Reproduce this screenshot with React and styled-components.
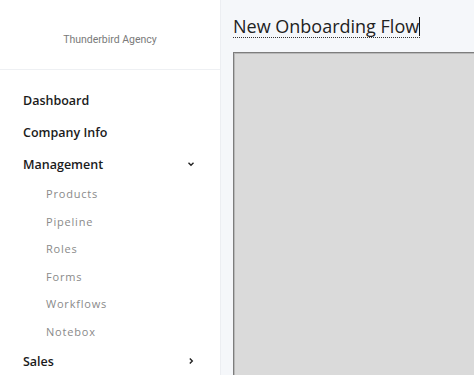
import React from "react";
import styled, { createGlobalStyle } from "styled-components";

const Global = createGlobalStyle`
  html, body { margin: 0; padding: 0; height: 100%; overflow: hidden; }
  body { font-family: "Open Sans", "DejaVu Sans", sans-serif; background: #fff; }
  #root { height: 100%; }
`;

const Layout = styled.div`
  display: flex;
  height: 100%;
`;

const Sidebar = styled.aside`
  width: 220px;
  flex: 0 0 220px;
  background: #fff;
  border-right: 1px solid #eceef2;
  display: flex;
  flex-direction: column;
  overflow: hidden;
`;

const Brand = styled.div`
  flex: 0 0 70px;
  box-sizing: border-box;
  border-bottom: 1px solid #eef0f3;
  display: flex;
  align-items: center;
  justify-content: center;
  font-family: "Roboto", sans-serif;
  font-size: 10.5px;
  color: #7a7a7a;
  padding-top: 10px;
`;

const Nav = styled.nav`
  flex: 0 0 auto;
  display: flex;
  flex-direction: column;
  padding: 14px 24px 0 23px;
`;

const NavItem = styled.div`
  flex: 0 0 32px;
  height: 32px;
  display: flex;
  align-items: center;
  justify-content: space-between;
  font-family: "Open Sans", sans-serif;
  font-weight: 600;
  font-size: 12.5px;
  color: #1b1b1b;
`;

const SubList = styled.div`
  display: flex;
  flex-direction: column;
  padding: 0 0 0 23px;
`;

const SubItem = styled.div`
  flex: 0 0 27.5px;
  height: 27.5px;
  display: flex;
  align-items: center;
  font-family: "Open Sans", sans-serif;
  font-size: 11px;
  letter-spacing: 0.8px;
  color: #8a8a8a;
`;

const Chevron = styled.svg`
  width: 8px;
  height: 8px;
  margin-right: 1px;
`;

const Main = styled.main`
  flex: 1;
  background: #f5f7fa;
  overflow: hidden;
  padding: 16px 0 0 12px;
  display: flex;
  flex-direction: column;
`;

const Title = styled.div`
  align-self: flex-start;
  font-family: "Open Sans", sans-serif;
  font-size: 18px;
  line-height: 21px;
  color: #222;
  border-bottom: 1px dotted #333;
  display: flex;
  align-items: center;
`;

const Caret = styled.span`
  display: inline-block;
  width: 1px;
  height: 19px;
  background: #111;
`;

const Canvas = styled.div`
  margin-top: 14px;
  width: 300px;
  flex: 1;
  background: #dadada;
  border-top: 1px solid #7d7d7d;
  border-left: 1px solid #7d7d7d;
  box-shadow: inset 1px 1px 0 #b8b8b8;
`;

const Down = () => (
  <Chevron viewBox="0 0 8 8">
    <path d="M1.5 2.8 L4 5.3 L6.5 2.8" fill="none" stroke="#222" strokeWidth="1.4" />
  </Chevron>
);
const Right = () => (
  <Chevron viewBox="0 0 8 8">
    <path d="M2.8 1.5 L5.3 4 L2.8 6.5" fill="none" stroke="#222" strokeWidth="1.4" />
  </Chevron>
);

const subs = ["Products", "Pipeline", "Roles", "Forms", "Workflows", "Notebox"];

export default function App() {
  return (
    <>
      <Global />
      <Layout>
        <Sidebar>
          <Brand>Thunderbird Agency</Brand>
          <Nav>
            <NavItem>Dashboard</NavItem>
            <NavItem>Company Info</NavItem>
            <NavItem>
              Management
              <Down />
            </NavItem>
            <SubList>
              {subs.map((s) => (
                <SubItem key={s}>{s}</SubItem>
              ))}
            </SubList>
            <NavItem>
              Sales
              <Right />
            </NavItem>
          </Nav>
        </Sidebar>
        <Main>
          <Title>
            New Onboarding Flow
            <Caret />
          </Title>
          <Canvas />
        </Main>
      </Layout>
    </>
  );
}
